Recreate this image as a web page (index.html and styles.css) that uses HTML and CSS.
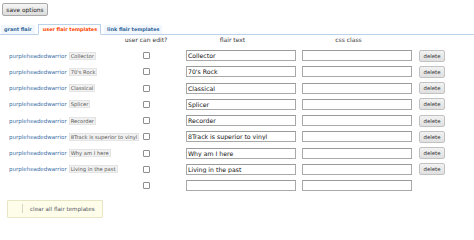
FILE: index.html
```html
<!DOCTYPE html>
<html>
<head>
<meta charset="utf-8">
<link rel="stylesheet" href="styles.css">
</head>
<body>
<button class="save">save options</button>
<div class="tabs">
  <a class="tab">grant flair</a>
  <a class="tab selected">user flair templates</a>
  <a class="tab">link flair templates</a>
</div>
<div class="table">
  <div class="head">
    <span></span>
    <span class="h h-edit">user can edit?</span>
    <span class="h h-text">flair text</span>
    <span class="h h-css">css class</span>
    <span></span>
  </div>
  <div class="row">
    <span class="who"><span class="name">purpleheadedwarrior</span><span class="tag">Collector</span></span>
    <input type="checkbox" class="cb">
    <input type="text" class="txt t1" value="Collector">
    <input type="text" class="txt t2" value="">
    <button class="del">delete</button>
  </div>
  <div class="row">
    <span class="who"><span class="name">purpleheadedwarrior</span><span class="tag">70's Rock</span></span>
    <input type="checkbox" class="cb">
    <input type="text" class="txt t1" value="70's Rock">
    <input type="text" class="txt t2" value="">
    <button class="del">delete</button>
  </div>
  <div class="row">
    <span class="who"><span class="name">purpleheadedwarrior</span><span class="tag">Classical</span></span>
    <input type="checkbox" class="cb">
    <input type="text" class="txt t1" value="Classical">
    <input type="text" class="txt t2" value="">
    <button class="del">delete</button>
  </div>
  <div class="row">
    <span class="who"><span class="name">purpleheadedwarrior</span><span class="tag">Splicer</span></span>
    <input type="checkbox" class="cb">
    <input type="text" class="txt t1" value="Splicer">
    <input type="text" class="txt t2" value="">
    <button class="del">delete</button>
  </div>
  <div class="row">
    <span class="who"><span class="name">purpleheadedwarrior</span><span class="tag">Recorder</span></span>
    <input type="checkbox" class="cb">
    <input type="text" class="txt t1" value="Recorder">
    <input type="text" class="txt t2" value="">
    <button class="del">delete</button>
  </div>
  <div class="row">
    <span class="who"><span class="name">purpleheadedwarrior</span><span class="tag">8Track is superior to vinyl</span></span>
    <input type="checkbox" class="cb">
    <input type="text" class="txt t1" value="8Track is superior to vinyl">
    <input type="text" class="txt t2" value="">
    <button class="del">delete</button>
  </div>
  <div class="row">
    <span class="who"><span class="name">purpleheadedwarrior</span><span class="tag">Why am I here</span></span>
    <input type="checkbox" class="cb">
    <input type="text" class="txt t1" value="Why am I here">
    <input type="text" class="txt t2" value="">
    <button class="del">delete</button>
  </div>
  <div class="row">
    <span class="who"><span class="name">purpleheadedwarrior</span><span class="tag">Living in the past</span></span>
    <input type="checkbox" class="cb">
    <input type="text" class="txt t1" value="Living in the past">
    <input type="text" class="txt t2" value="">
    <button class="del">delete</button>
  </div>
  <div class="row">
    <span class="who"></span>
    <input type="checkbox" class="cb">
    <input type="text" class="txt t1" value="">
    <input type="text" class="txt t2" value="">
    <span></span>
  </div>
</div>
<div class="clear"><span class="divider"></span><span class="clear-label">clear all flair templates</span></div>
</body>
</html>
```

FILE: styles.css
```css
html, body {
  margin: 0;
  padding: 0;
  background: #ffffff;
  font-family: "DejaVu Sans", Verdana, sans-serif;
  color: #222;
}

.save {
  display: block;
  margin: 3px 0 0 2px;
  width: 46px;
  height: 13px;
  padding: 0;
  box-sizing: border-box;
  font-family: "DejaVu Sans", Verdana, sans-serif;
  font-size: 5.9px;
  color: #222;
  border: 1px solid #a8a8a8;
  border-radius: 2px;
  background: linear-gradient(#f6f6f6, #dcdcdc);
}

.tabs {
  display: flex;
  gap: 3px;
  margin-top: 9px;
  padding-left: 1px;
  height: 9px;
  border-bottom: 1px solid #bcd2e8;
}

.tab {
  display: block;
  height: 9px;
  line-height: 9px;
  padding: 0 3px;
  font-size: 4.9px;
  font-weight: bold;
  color: #336699;
  background: #f1f7fd;
  white-space: nowrap;
}

.tab.selected {
  color: #ff4500;
  background: #ffffff;
  border: 1px solid #bcd2e8;
  border-bottom-color: #ffffff;
  height: 9px;
  line-height: 9px;
  padding: 0 3px 0 4px;
  box-sizing: content-box;
  position: relative;
  top: -1px;
}

.table {
  padding-left: 9px;
}

.head,
.row {
  display: grid;
  grid-template-columns: 115px 44px 128px 116px 33px;
  align-items: center;
}

.head {
  height: 12.4px;
  align-items: start;
  line-height: 9px;
  font-size: 6px;
  color: #333;
}

.h {
  white-space: nowrap;
  text-align: center;
}

.h-text {
  padding-left: 18px;
  padding-right: 17px;
}

.h-css {
  padding-left: 6px;
  padding-right: 17px;
}

.row {
  height: 16.25px;
}

.who {
  white-space: nowrap;
  display: flex;
  align-items: center;
}

.name {
  font-size: 5.5px;
  color: #4070a8;
}

.tag {
  margin-left: 2px;
  font-size: 5.2px;
  line-height: 6px;
  color: #555;
  background: #f1f1f1;
  border: 1px solid #e4e4e4;
  padding: 0 1px;
}

.cb {
  appearance: none;
  -webkit-appearance: none;
  justify-self: center;
  margin: 0;
  width: 7px;
  height: 7px;
  box-sizing: border-box;
  border: 1px solid #8e8e8e;
  border-radius: 1px;
  background: #fff;
}

.txt {
  justify-self: end;
  width: 110px;
  height: 11px;
  margin: 0;
  box-sizing: border-box;
  padding: 0 1px;
  font-family: "DejaVu Sans", Verdana, sans-serif;
  font-size: 6.2px;
  color: #111;
  border: 1px solid #a9a9a9;
  border-top-color: #9a9a9a;
  background: #fff;
  outline: none;
}

.del {
  justify-self: end;
  width: 26px;
  height: 12px;
  margin: 0;
  padding: 0;
  box-sizing: border-box;
  font-family: "DejaVu Sans", Verdana, sans-serif;
  font-size: 5.4px;
  color: #333;
  border: 1px solid #c2c2c2;
  border-radius: 2px;
  background: linear-gradient(#f2f2f2, #e0e0e0);
}

.clear {
  display: flex;
  align-items: center;
  margin: 6.3px 0 0 7px;
  width: 96px;
  height: 18px;
  box-sizing: border-box;
  padding-left: 14px;
  background: #fdfde9;
  border: 1px solid #e6e6c6;
  border-radius: 1px;
}

.divider {
  width: 1px;
  height: 9px;
  background: #d6d6c0;
  margin-right: 7px;
}

.clear-label {
  font-size: 5.6px;
  color: #556;
  white-space: nowrap;
}
```
